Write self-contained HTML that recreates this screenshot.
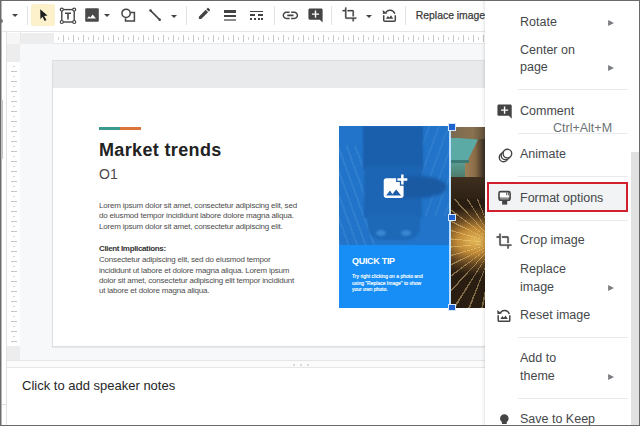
<!DOCTYPE html>
<html><head><meta charset="utf-8">
<style>
*{margin:0;padding:0;box-sizing:border-box}
html,body{width:640px;height:426px;overflow:hidden;background:#fff;font-family:"Liberation Sans",sans-serif}
.a{position:absolute}
#toolbar{left:0;top:0;width:640px;height:32px;background:#fff;border-bottom:1px solid #e4e6e8}
.sep{position:absolute;top:6px;width:1px;height:19px;background:#e3e3e3}
.dd{position:absolute;width:0;height:0;border-left:3.5px solid transparent;border-right:3.5px solid transparent;border-top:3.5px solid #444}
#canvas{left:20px;top:44px;width:470px;height:316px;background:#f7f8f9}
#slide{left:52px;top:60px;width:440px;height:287px;background:#fff;border:1px solid #dcdee0;box-shadow:0 1px 1px rgba(0,0,0,.06)}
#band{left:53px;top:61px;width:440px;height:27px;background:#e8eaeb}
#menu{left:485px;top:0;width:155px;height:426px;background:#fff;box-shadow:-1px 0 3px rgba(0,0,0,.12)}
.mi{position:absolute;left:520px;font-size:12.5px;line-height:17.5px;color:#45484b;white-space:nowrap}
.ms{position:absolute;left:518px;width:110px;height:1px;background:#e8eaed}
.arr{position:absolute;left:608px;width:0;height:0;border-top:2.6px solid transparent;border-bottom:2.6px solid transparent;border-left:5px solid #80868b}
.body{position:absolute;left:99px;font-size:8px;line-height:10.3px;color:#4d4d4d;white-space:nowrap}
</style></head><body>

<!-- toolbar -->
<div id="toolbar" class="a"></div>
<div class="dd" style="left:12px;top:14px"></div>
<div class="sep" style="left:27px"></div>
<div class="a" style="left:31px;top:4px;width:24px;height:22px;background:#fdf1cb;border-radius:2px"></div>


<!-- toolbar icons -->
<svg class="a" style="left:35.8px;top:7.8px" width="14.4" height="14.4" viewBox="0 0 24 24"><path fill="#1f1f1f" d="M7 2.2l12.2 10.2-5.6.9 3.8 6.6-3 1.6-3.6-6.8L7.4 18.6z"/></svg>
<svg class="a" style="left:58px;top:5.5px" width="20" height="20" viewBox="0 0 20 20" fill="none" stroke="#444" stroke-width="1.4"><rect x="3.8" y="3.6" width="12.4" height="12.4"/><circle cx="3.8" cy="3.6" r="1.5" fill="#fff" stroke-width="1.2"/><circle cx="16.2" cy="3.6" r="1.5" fill="#fff" stroke-width="1.2"/><circle cx="3.8" cy="16" r="1.5" fill="#fff" stroke-width="1.2"/><circle cx="16.2" cy="16" r="1.5" fill="#fff" stroke-width="1.2"/><path d="M7 7.2h6M10 7.2v6.3" stroke-width="1.6"/></svg>
<svg class="a" style="left:85px;top:8px" width="14" height="14" viewBox="0 0 14 14"><rect x="0.2" y="0.2" width="13.6" height="13.6" rx="1" fill="#4a4a4a"/><path d="M2 10.5l2-2.2 1.3 1.3 2.4-3 3.3 3.9z" fill="#fff"/></svg>
<svg class="a" style="left:119px;top:6px" width="18" height="18" viewBox="0 0 18 18" fill="none" stroke="#444" stroke-width="1.5"><circle cx="7.1" cy="7.3" r="4.15"/><path d="M11.8 6.4h3.6v8.5H6.5v-2.6"/></svg>
<svg class="a" style="left:147px;top:7px" width="16" height="16" viewBox="0 0 16 16" stroke="#444" stroke-width="1.5" fill="#444"><path d="M3.6 3.6L12.6 12.6"/><circle cx="3.5" cy="3.5" r="1.3" stroke="none"/><circle cx="12.7" cy="12.7" r="1.3" stroke="none"/></svg>
<div class="dd" style="left:104px;top:14.2px"></div>
<div class="dd" style="left:171px;top:14.5px"></div>
<div class="dd" style="left:365.5px;top:14.5px"></div>
<div class="sep" style="left:186px"></div>
<div class="sep" style="left:273.5px"></div>
<div class="sep" style="left:331px"></div>
<div class="sep" style="left:405px"></div>
<svg class="a" style="left:196.9px;top:5.9px" width="14.93" height="14.93" viewBox="0 0 24 24"><path fill="#444" d="M3 17.25V21h3.75L17.81 9.94l-3.75-3.75L3 17.25zM20.71 7.04c.39-.39.39-1.02 0-1.41l-2.34-2.34c-.39-.39-1.02-.39-1.41 0l-1.83 1.83 3.75 3.75 1.83-1.83z"/></svg>
<div class="a" style="left:223.7px;top:10.1px;width:12.5px;height:3px;background:#444"></div>
<div class="a" style="left:223.7px;top:14.9px;width:12.5px;height:1.8px;background:#444"></div>
<div class="a" style="left:223.7px;top:19px;width:12.5px;height:1.7px;background:#8c8c8c"></div>
<div class="a" style="left:250.4px;top:10.5px;width:12.7px;height:1.7px;background:#444"></div>
<div class="a" style="left:250.4px;top:14.1px;width:5px;height:1.8px;background:#444"></div>
<div class="a" style="left:258px;top:14.1px;width:5.1px;height:1.8px;background:#444"></div>
<div class="a" style="left:250.4px;top:17.6px;width:1.9px;height:2px;background:#444"></div>
<div class="a" style="left:254.1px;top:17.6px;width:1.9px;height:2px;background:#444"></div>
<div class="a" style="left:257.7px;top:17.6px;width:1.9px;height:2px;background:#444"></div>
<div class="a" style="left:261.4px;top:17.6px;width:1.9px;height:2px;background:#444"></div>
<svg class="a" style="left:280.7px;top:5.6px" width="18.72" height="18.72" viewBox="0 0 24 24"><path fill="#444" d="M3.9 12c0-1.71 1.39-3.1 3.1-3.1h4V7H7c-2.76 0-5 2.24-5 5s2.24 5 5 5h4v-1.9H7c-1.71 0-3.1-1.39-3.1-3.1zM8 13h8v-2H8v2zm9-6h-4v1.9h4c1.71 0 3.1 1.39 3.1 3.1s-1.39 3.1-3.1 3.1h-4V17h4c2.76 0 5-2.24 5-5s-2.24-5-5-5z"/></svg>
<svg class="a" style="left:306.6px;top:6.6px" width="17.04" height="17.04" viewBox="0 0 24 24"><path fill="#444" d="M22 4c0-1.1-.9-2-2-2H4c-1.1 0-1.99.9-1.99 2L2 16c0 1.1.9 2 2 2h14l4 4-.01-18zM17 11h-4v4h-2v-4H7V9h4V5h2v4h4v2z"/></svg>
<svg class="a" style="left:341.6px;top:7.3px" width="14.95" height="14.95" viewBox="0 0 24 24"><path fill="#444" stroke="#444" stroke-width="0.5" d="M17 15h2V7c0-1.1-.9-2-2-2H9v2h8v8zM7 17V1H5v4H1v2h4v10c0 1.1.9 2 2 2h10v4h2v-4h4v-2H7z"/></svg>
<svg class="a" style="left:381.6px;top:8.5px" width="15" height="13" viewBox="0 0 14 13"><path d="M1.2 6.2V11.2q0 1 1 1H11.8q1 0 1-1V6.2" fill="none" stroke="#444" stroke-width="1.5"/><path d="M12.3 4.8C10.8 0.4 5.2 0.2 3.2 3.9" fill="none" stroke="#444" stroke-width="1.4"/><path d="M0.2 0.9L0.5 5.1 4.8 4.4z" fill="#444"/><path d="M3.3 9.8l2.1-2.9 1.5 1.6 1.6-2.2 2.3 3.5z" fill="#444"/></svg>
<div class="a" style="left:415.8px;top:8.9px;font-size:10.4px;line-height:14px;color:#3a3a3a;white-space:nowrap;-webkit-text-stroke:0.25px #3a3a3a">Replace image</div>

<!-- ruler -->
<div class="a" style="left:7px;top:32px;width:480px;height:12px;background:#fff;border-bottom:1px solid #e9e9e9"></div>
<div class="a" style="left:20px;top:33px;width:34px;height:11px;background:#ededed"></div>
<div class="a" style="left:54px;top:35px;width:431px;height:7px;background:repeating-linear-gradient(90deg,transparent 0,transparent 9px,#c6c6c6 9px,#c6c6c6 10px)"></div>
<div class="a" style="left:54px;top:37px;width:431px;height:3px;background:repeating-linear-gradient(90deg,transparent 0,transparent 4px,#d2d2d2 4px,#d2d2d2 5px,transparent 5px,transparent 10px)"></div>
<div class="a" style="left:7px;top:32px;width:14px;height:328px;background:#fff;border-right:1px solid #e9e9e9"></div>
<div class="a" style="left:6px;top:32px;width:1px;height:394px;background:#e2e2e2"></div>
<div class="a" style="left:1px;top:404px;width:6px;height:1px;background:#e0e0e0"></div>
<div class="a" style="left:7px;top:44px;width:13px;height:18px;background:#ededed"></div>
<div class="a" style="left:7px;top:346px;width:13px;height:14px;background:#ededed"></div>
<div class="a" style="left:11px;top:62px;width:6px;height:284px;background:repeating-linear-gradient(180deg,transparent 0,transparent 9px,#c6c6c6 9px,#c6c6c6 10px)"></div>
<div class="a" style="left:13px;top:62px;width:2px;height:284px;background:repeating-linear-gradient(180deg,transparent 0,transparent 4px,#d2d2d2 4px,#d2d2d2 5px,transparent 5px,transparent 10px)"></div>
<div class="a" style="left:7px;top:33px;width:13px;height:11px;background:#f6f6f6"></div>
<!-- canvas -->
<div id="canvas" class="a"></div>
<div id="slide" class="a"></div>
<div id="band" class="a"></div>
<div class="a" style="left:99px;top:127px;width:21px;height:2.6px;background:#3a9a8e"></div>
<div class="a" style="left:120px;top:127px;width:21px;height:2.6px;background:#d9743a"></div>
<div class="a" style="left:99px;top:140px;font-size:18px;line-height:20px;font-weight:700;color:#222;white-space:nowrap;letter-spacing:0.35px">Market trends</div>
<div class="a" style="left:99px;top:166px;font-size:14px;line-height:16px;color:#4a4a4a;white-space:nowrap;letter-spacing:0.2px">O1</div>
<div class="body" style="top:201.2px;letter-spacing:-0.2px">Lorem ipsum dolor sit amet, consectetur adipiscing elit, sed<br>do eiusmod tempor incididunt labore dolore magna aliqua.<br>Lorem ipsum dolor sit amet, consectetur adipiscing elit.</div>
<div class="body" style="top:244.2px;letter-spacing:-0.35px;font-weight:700;color:#333">Client Implications:</div>
<div class="body" style="top:255.4px;letter-spacing:-0.2px">Consectetur adipiscing elit, sed do eiusmod tempor<br>incididunt ut labore et dolore magna aliqua. Lorem ipsum<br>dolor sit amet, consectetur adipiscing elit tempor incididunt<br>ut labore et dolore magna aliqua.</div>

<!-- card -->
<div class="a" style="left:339px;top:126px;width:111px;height:119px;background:#2174c9;overflow:hidden">
  <div class="a" style="left:-6px;top:20px;width:44px;height:100px;filter:blur(0.6px);background:repeating-linear-gradient(70deg,transparent 0,transparent 6px,rgba(170,210,250,.11) 6px,rgba(170,210,250,.11) 8px)"></div>
  <div class="a" style="left:82px;top:0;width:30px;height:90px;filter:blur(0.6px);background:repeating-linear-gradient(110deg,transparent 0,transparent 7px,rgba(170,210,250,.09) 7px,rgba(170,210,250,.09) 9px)"></div>
  <div class="a" style="left:24px;top:0;width:60px;height:44px;background:#1a5fac;filter:blur(1px)"></div>
  <div class="a" style="left:25px;top:40px;width:58px;height:52px;background:#1c65b4;filter:blur(1px)"></div>
  <div class="a" style="left:46px;top:50px;width:62px;height:22px;background:#1a5aa3;border-radius:50%;filter:blur(1.5px)"></div>
  <div class="a" style="left:29px;top:88px;width:52px;height:26px;background:#1d68b7;border-radius:0 0 14px 14px;filter:blur(1px)"></div>
  <div class="a" style="left:37px;top:104px;width:10px;height:6px;background:#3a88d4;border-radius:50%;filter:blur(1px)"></div>
  <div class="a" style="left:62px;top:104px;width:10px;height:6px;background:#3a88d4;border-radius:50%;filter:blur(1px)"></div>
</div>
<div class="a" style="left:339px;top:245px;width:111px;height:62.5px;background:#178ef6"></div>
<svg class="a" style="left:379.9px;top:172px" width="29.8" height="29.8" viewBox="0 0 24 24"><path fill="#fff" fill-rule="evenodd" d="M19 7v2.99s-1.99.01-2 0V7h-3s.01-1.99 0-2h3V2h2v3h3v2h-3zm-3 4V8h-3V5H5c-1.1 0-2 .9-2 2v12c0 1.1.9 2 2 2h12c1.1 0 2-.9 2-2v-8h-3zM5 19l3-4 2 3 3-4 4 5H5z"/></svg>
<div class="a" style="left:352px;top:255.8px;font-size:9px;line-height:11px;font-weight:700;color:#fff;white-space:nowrap;letter-spacing:-0.3px">QUICK TIP</div>
<div class="a" style="left:352px;top:273px;font-size:5px;line-height:6.6px;color:#fff;white-space:nowrap;letter-spacing:0px;-webkit-text-stroke:0.15px #fff">Try right clicking on a photo and<br>using "Replace Image" to show<br>your own photo.</div>
<!-- photo -->
<div class="a" style="left:451px;top:126.5px;width:36px;height:181px;overflow:hidden;background:#3a2a1a">
  <div class="a" style="left:0;top:0;width:36px;height:14px;background:linear-gradient(90deg,#7a6a50,#8a7250 60%,#5a4a36)"></div>
  <div class="a" style="left:12px;top:12px;width:24px;height:46px;background:linear-gradient(90deg,#a2845a,#8a6c48 50%,#3e3428 85%)"></div>
  <div class="a" style="left:0;top:11px;width:27px;height:24px;background:#5caaa6;clip-path:polygon(0 0,100% 8%,60% 100%,0 100%)"></div>
  <div class="a" style="left:0;top:33px;width:18px;height:3px;background:#3c7a78"></div>
  <div class="a" style="left:0;top:36px;width:14px;height:22px;background:linear-gradient(180deg,#5a9a90,#466a58)"></div>
  <div class="a" style="left:0;top:50px;width:36px;height:22px;background:linear-gradient(180deg,#3e2e1e,#2e2216)"></div>
  <div class="a" style="left:0;top:72px;width:36px;height:109px;background:radial-gradient(ellipse 50px 34px at 24px 42px,#e4b858 0%,#c08a38 35%,#5e4220 70%,#2a1e12 100%)"></div>
  <div class="a" style="left:0;top:72px;width:36px;height:109px;opacity:.45;filter:blur(0.4px);background:repeating-conic-gradient(from 3deg at 44px 44px,transparent 0deg,transparent 9deg,rgba(255,225,150,.9) 9deg,rgba(255,225,150,.9) 10.5deg)"></div>
</div>
<!-- selection -->
<div class="a" style="left:448.5px;top:127px;width:2.8px;height:181px;background:#bfe0fb"></div>
<div class="a" style="left:448.2px;top:123.2px;width:7.6px;height:7.6px;background:#2062cf;border:1px solid #d6e8fb"></div>
<div class="a" style="left:448.2px;top:213.6px;width:7.6px;height:7.6px;background:#2062cf;border:1px solid #d6e8fb"></div>
<div class="a" style="left:448.2px;top:303.8px;width:7.6px;height:7.6px;background:#2062cf;border:1px solid #d6e8fb"></div>

<!-- notes -->
<div class="a" style="left:7px;top:360px;width:480px;height:8px;background:#fbfbfb;border-top:1px solid #e6e6e6;border-bottom:1px solid #e6e6e6"></div>
<div class="a" style="left:22px;top:377.7px;font-size:13px;line-height:16px;color:#262626">Click to add speaker notes</div>

<div class="a" style="left:292.5px;top:363.5px;width:2.8px;height:2.8px;border-radius:50%;background:#cdd0d3"></div>
<div class="a" style="left:299.5px;top:363.5px;width:2.8px;height:2.8px;border-radius:50%;background:#cdd0d3"></div>
<div class="a" style="left:306.5px;top:363.5px;width:2.8px;height:2.8px;border-radius:50%;background:#cdd0d3"></div>
<!-- menu -->
<div id="menu" class="a"></div>
<div class="a" style="left:486.8px;top:182px;width:141.2px;height:29.6px;border:2.4px solid #d3202f;background:#f1f3f4"></div>
<div class="mi" style="top:13.8px">Rotate</div>
<svg class="a" style="left:607.5px;top:19.5px" width="6" height="6" viewBox="0 0 6 6"><path d="M0.1 0L6 3 0.1 6z" fill="#7a7d80"/></svg>
<div class="mi" style="top:41.8px">Center on<br>page</div>
<svg class="a" style="left:607.5px;top:65.0px" width="6" height="6" viewBox="0 0 6 6"><path d="M0.1 0L6 3 0.1 6z" fill="#7a7d80"/></svg>
<div class="ms" style="top:89px"></div>
<svg class="a" style="left:496px;top:103.1px" width="17.16" height="17.16" viewBox="0 0 24 24"><path fill="#444" d="M22 4c0-1.1-.9-2-2-2H4c-1.1 0-1.99.9-1.99 2L2 16c0 1.1.9 2 2 2h14l4 4-.01-18zM17 11h-4v4h-2v-4H7V9h4V5h2v4h4v2z"/></svg>
<div class="mi" style="top:102.5px">Comment</div>
<div class="mi" style="top:120.3px;left:553px;color:#6f7378">Ctrl+Alt+M</div>
<div class="ms" style="top:133px"></div>
<svg class="a" style="left:497.5px;top:147.5px" width="15" height="15" viewBox="0 0 15 15" fill="#fff" stroke="#444" stroke-width="1.4"><circle cx="5.6" cy="9.4" r="4.3"/><circle cx="7.5" cy="7.5" r="4.3"/><circle cx="9.4" cy="5.6" r="4.3"/></svg>
<div class="mi" style="top:145.9px">Animate</div>
<div class="ms" style="top:176px"></div>
<svg class="a" style="left:497px;top:190px" width="15" height="16" viewBox="0 0 15 16"><rect x="2" y="1.6" width="11.1" height="8.6" rx="1.6" fill="#fff" stroke="#444" stroke-width="1.6"/><path d="M9.7 2.4v2.8M11.4 2.4v3" stroke="#444" stroke-width="0.9"/><rect x="2" y="7.6" width="11.1" height="3.1" fill="#444"/><rect x="3.2" y="8.5" width="8.7" height="0.8" fill="#ddd"/><rect x="5.1" y="10.6" width="5.1" height="4" fill="#444"/></svg>
<div class="mi" style="top:189.5px">Format options</div>
<div class="ms" style="top:219.5px"></div>
<svg class="a" style="left:496.3px;top:233.3px" width="16.08" height="16.08" viewBox="0 0 24 24"><path fill="#444" stroke="#444" stroke-width="0.5" d="M17 15h2V7c0-1.1-.9-2-2-2H9v2h8v8zM7 17V1H5v4H1v2h4v10c0 1.1.9 2 2 2h10v4h2v-4h4v-2H7z"/></svg>
<div class="mi" style="top:232.1px">Crop image</div>
<div class="mi" style="top:261.0px">Replace<br>image</div>
<svg class="a" style="left:607.5px;top:284.5px" width="6" height="6" viewBox="0 0 6 6"><path d="M0.1 0L6 3 0.1 6z" fill="#7a7d80"/></svg>
<svg class="a" style="left:497.4px;top:309px" width="14" height="13.3" viewBox="0 0 14 13"><path d="M1.2 6.2V11.2q0 1 1 1H11.8q1 0 1-1V6.2" fill="none" stroke="#444" stroke-width="1.5"/><path d="M12.3 4.8C10.8 0.4 5.2 0.2 3.2 3.9" fill="none" stroke="#444" stroke-width="1.4"/><path d="M0.2 0.9L0.5 5.1 4.8 4.4z" fill="#444"/><path d="M3.3 9.8l2.1-2.9 1.5 1.6 1.6-2.2 2.3 3.5z" fill="#444"/></svg>
<div class="mi" style="top:306.8px">Reset image</div>
<div class="ms" style="top:336.5px"></div>
<div class="mi" style="top:350.1px">Add to<br>theme</div>
<svg class="a" style="left:607.5px;top:373.5px" width="6" height="6" viewBox="0 0 6 6"><path d="M0.1 0L6 3 0.1 6z" fill="#7a7d80"/></svg>
<div class="ms" style="top:397.7px"></div>
<svg class="a" style="left:496.7px;top:412.8px" width="14.7" height="14.7" viewBox="0 0 24 24"><path fill="#444" d="M9 21c0 .55.45 1 1 1h4c.55 0 1-.45 1-1v-1H9v1zm3-19C8.14 2 5 5.14 5 9c0 2.38 1.19 4.47 3 5.74V17c0 .55.45 1 1 1h6c.55 0 1-.45 1-1v-2.26c1.81-1.27 3-3.36 3-5.74 0-3.860-3.14-7-7-7z"/></svg>
<div class="mi" style="top:411.3px">Save to Keep</div>
<div class="a" style="left:631px;top:151.5px;width:8px;height:275px;background:#e1e1e1"></div>

<!-- outer border -->
<div class="a" style="left:0;top:0;width:2px;height:426px;background:linear-gradient(90deg,#5e5e5e 50%,#b8b8b8 50%)"></div>
<div class="a" style="left:0;top:19px;width:2.5px;height:4px;border-radius:0 2px 2px 0;background:#777"></div>
<div class="a" style="left:0;top:100px;width:3px;height:59px;background:#c4c4c4"></div>
<div class="a" style="left:0;top:0;width:640px;height:426px;border:1px solid #6a6a6a;border-width:1px 1px 1px 1px"></div>
</body></html>
